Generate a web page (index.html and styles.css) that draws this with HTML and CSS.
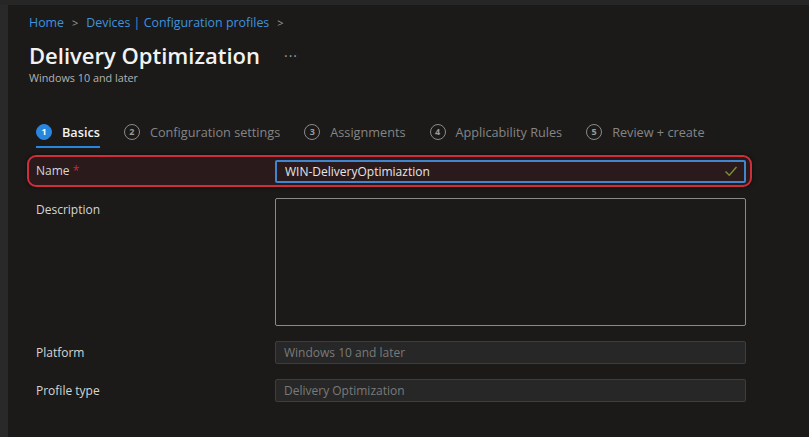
FILE: index.html
```html
<!DOCTYPE html>
<html lang="en">
<head>
  <meta charset="UTF-8">
  <meta name="viewport" content="width=device-width, initial-scale=1.0">
  <title>Delivery Optimization</title>
  <link rel="stylesheet" href="styles.css">
</head>
<body>
  <div class="topbar"></div>
  <div class="shell">
    <div class="rail"></div>
    <div class="main">
      <nav class="breadcrumb">
        <a href="#">Home</a>
        <span class="chevron">&gt;</span>
        <a href="#">Devices | Configuration profiles</a>
        <span class="chevron">&gt;</span>
      </nav>

      <div class="title-row">
        <h1>Delivery Optimization</h1>
        <span class="more">&middot;&middot;&middot;</span>
      </div>
      <div class="subtitle">Windows 10 and later</div>

      <ul class="steps">
        <li class="step active">
          <span class="step-num">1</span>
          <span class="step-label">Basics</span>
        </li>
        <li class="step">
          <span class="step-num">2</span>
          <span class="step-label">Configuration settings</span>
        </li>
        <li class="step">
          <span class="step-num">3</span>
          <span class="step-label">Assignments</span>
        </li>
        <li class="step">
          <span class="step-num">4</span>
          <span class="step-label">Applicability Rules</span>
        </li>
        <li class="step">
          <span class="step-num">5</span>
          <span class="step-label">Review + create</span>
        </li>
      </ul>

      <form class="basics-form">
        <div class="form-row highlight">
          <label for="name">Name <span class="req">*</span></label>
          <div class="field valid">
            <input type="text" id="name" value="WIN-DeliveryOptimiaztion">
            <svg class="check" width="14" height="12" viewBox="0 0 14 12">
              <path d="M1.5 6.5l3.8 3.8L12.5 2" fill="none" stroke="#7d8f35" stroke-width="1.4"/>
            </svg>
          </div>
        </div>
        <div class="form-row">
          <label for="description">Description</label>
          <textarea id="description"></textarea>
        </div>
        <div class="form-row">
          <label for="platform">Platform</label>
          <input type="text" id="platform" value="Windows 10 and later" disabled>
        </div>
        <div class="form-row">
          <label for="profile-type">Profile type</label>
          <input type="text" id="profile-type" value="Delivery Optimization" disabled>
        </div>
      </form>
    </div>
  </div>
</body>
</html>
```

FILE: styles.css
```css
body {
  font-family: "Open Sans", "Noto Sans", sans-serif;
  background-color: #1b1a19;
  color: #d6d6d6;
  margin: 0;
  padding: 0;
  height: 437px;
  overflow: hidden;
}

.topbar {
  height: 5px;
  background-color: #262626;
}

.shell {
  display: flex;
  height: 432px;
}

.rail {
  width: 8px;
  background-color: #292929;
}

.main {
  flex: 1;
  padding: 9px 0 0 21px;
}

.breadcrumb {
  display: flex;
  align-items: center;
  gap: 8px;
  font-size: 12.4px;
  line-height: 18px;
}

.breadcrumb a {
  color: #3f92df;
  text-decoration: none;
}

.breadcrumb .chevron {
  color: #9a9a9a;
  font-size: 11px;
}

.title-row {
  display: flex;
  align-items: center;
  margin-top: 8px;
  height: 30px;
}

.title-row h1 {
  margin: 0;
  font-size: 22px;
  font-weight: 600;
  line-height: 30px;
  color: #f2f2f2;
}

.title-row .more {
  margin-left: 24px;
  color: #9a9a9a;
  font-size: 14px;
  letter-spacing: 1px;
}

.subtitle {
  margin-top: 1px;
  font-size: 10.8px;
  line-height: 14px;
  color: #b3b3b3;
}

.steps {
  display: flex;
  gap: 24px;
  list-style: none;
  margin: 33px 0 0 7px;
  padding: 0;
}

.step {
  display: flex;
  align-items: center;
  gap: 10px;
  height: 28px;
  font-size: 12.7px;
  color: #858585;
  border-bottom: 2px solid transparent;
}

.step-num {
  width: 14px;
  height: 14px;
  border: 1px solid #8a8a8a;
  border-radius: 50%;
  font-size: 9px;
  font-weight: 700;
  line-height: 14px;
  text-align: center;
  color: #9a9a9a;
}

.step.active {
  color: #f2f2f2;
  font-weight: 600;
  border-bottom-color: #2886de;
}

.step.active .step-num {
  background-color: #2886de;
  border-color: #2886de;
  color: #ffffff;
}

.basics-form {
  display: flex;
  flex-direction: column;
  gap: 7px;
  margin: 7px 0 0 -2px;
  width: 725px;
}

.form-row {
  display: flex;
  align-items: flex-start;
  padding: 2px 4px 2px 7px;
  border: 2px solid transparent;
  border-radius: 9px;
}

.form-row.highlight {
  border-color: #cf2f3b;
  background-color: #2a1a1c;
  box-shadow: 0 0 4px rgba(0, 0, 0, 0.6);
}

.form-row label {
  width: 239px;
  flex-shrink: 0;
  font-size: 12px;
  line-height: 23px;
  color: #d6d6d6;
}

.req {
  color: #c8283a;
}

.form-row input,
.form-row textarea {
  box-sizing: border-box;
  width: 471px;
  height: 23px;
  padding: 0 8px;
  font-family: inherit;
  font-size: 12px;
  border: 1px solid #8a8a8a;
  border-radius: 2px;
  background-color: #1b1a19;
  color: #e6e6e6;
  outline: none;
}

.form-row textarea {
  height: 128px;
  resize: none;
}

.form-row input:disabled {
  background-color: #272727;
  border-color: #3d3d3d;
  color: #7a7a7a;
}

.field {
  position: relative;
}

.field.valid input {
  border: 2px solid #3f86cf;
  background-color: #2a1a1c;
}

.check {
  position: absolute;
  right: 8px;
  top: 6px;
}
```
